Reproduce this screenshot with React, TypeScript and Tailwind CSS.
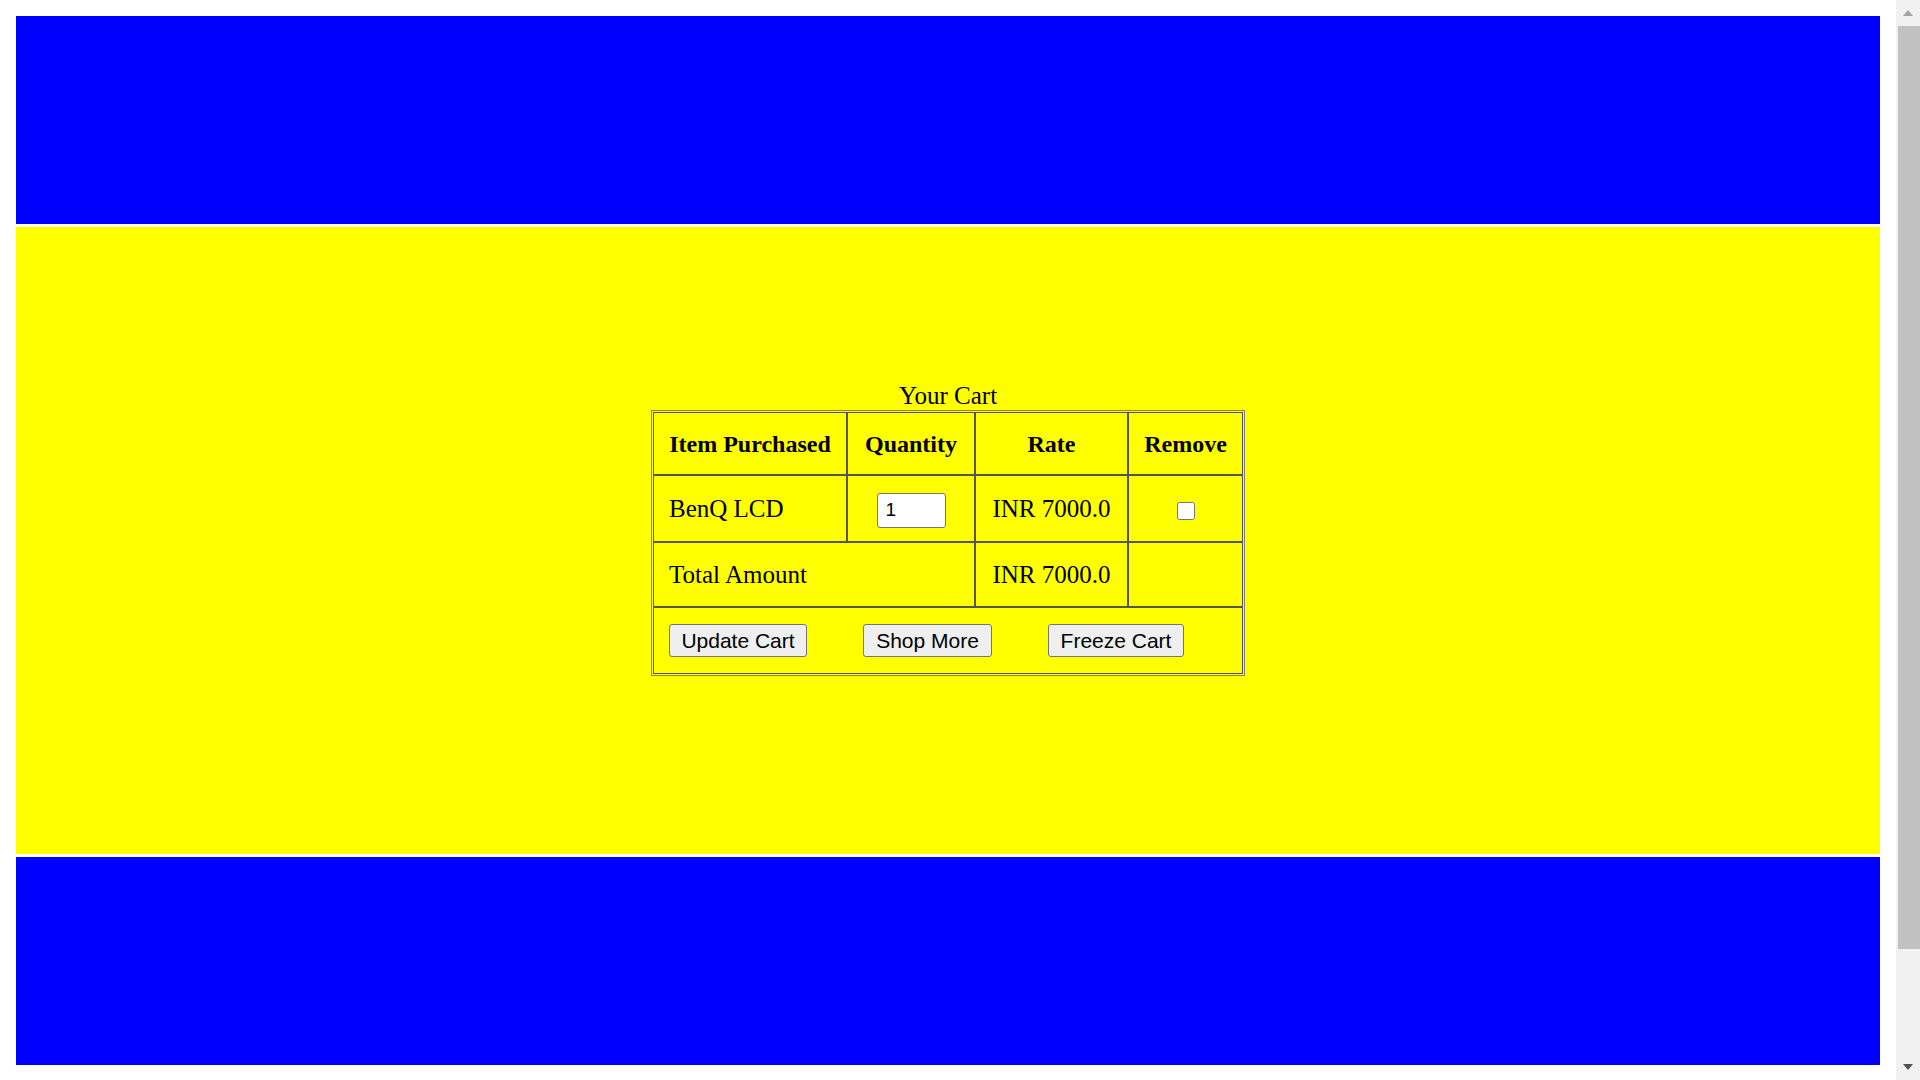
export default function App() {
  return (
    <div className="bg-white pt-4 pl-4 pb-[150px] font-['Liberation_Serif',serif] text-black">
      <div className="flex w-[1864px] flex-col gap-[3px]">
        {/* top frame */}
        <div className="h-[208px] bg-[#0000ff]" />

        {/* cart frame */}
        <div className="flex h-[627px] flex-col items-center bg-[#ffff00] pt-[154px]">
          <div className="h-[29px] text-center text-[25px] leading-[29px]">Your Cart</div>
          <div className="border border-[#808080] p-[1px]">
            <table className="table-fixed border-separate border-spacing-0 text-[25px]">
              <thead>
                <tr className="h-[63px]">
                  <th className="w-[194px] border border-[#555] text-[24px] font-bold">Item Purchased</th>
                  <th className="w-[128px] border border-[#555] text-[24px] font-bold">Quantity</th>
                  <th className="w-[153px] border border-[#555] text-[24px] font-bold">Rate</th>
                  <th className="w-[115px] border border-[#555] text-[24px] font-bold">Remove</th>
                </tr>
              </thead>
              <tbody>
                <tr className="h-[67px]">
                  <td className="border border-[#555] pl-[15px]">BenQ LCD</td>
                  <td className="border border-[#555] text-center">
                    <input
                      type="text"
                      defaultValue="1"
                      className="h-[35px] w-[69px] rounded-[3px] border border-[#767676] bg-white px-2 font-['Liberation_Sans',sans-serif] text-[19px] align-middle"
                    />
                  </td>
                  <td className="border border-[#555] text-center">INR 7000.0</td>
                  <td className="border border-[#555] text-center">
                    <input type="checkbox" className="h-[18px] w-[18px] align-middle" />
                  </td>
                </tr>
                <tr className="h-[65px]">
                  <td colSpan={2} className="border border-[#555] pl-[15px]">Total Amount</td>
                  <td className="border border-[#555] text-center">INR 7000.0</td>
                  <td className="border border-[#555]" />
                </tr>
                <tr className="h-[67px]">
                  <td colSpan={4} className="border border-[#555] pl-[15px]">
                    <div className="flex gap-[56px] font-['Liberation_Sans',sans-serif] text-[21px]">
                      <button className="h-[33px] w-[138px] rounded-[3px] border border-[#767676] bg-[#efefef]">Update Cart</button>
                      <button className="h-[33px] w-[129px] rounded-[3px] border border-[#767676] bg-[#efefef]">Shop More</button>
                      <button className="h-[33px] w-[136px] rounded-[3px] border border-[#767676] bg-[#efefef]">Freeze Cart</button>
                    </div>
                  </td>
                </tr>
              </tbody>
            </table>
          </div>
        </div>

        {/* bottom frame */}
        <div className="h-[208px] bg-[#0000ff]" />
      </div>

      {/* browser scrollbar */}
      <div className="fixed top-0 right-0 flex h-screen w-6 flex-col bg-[#f1f1f1]">
        <div className="flex h-[26px] items-center justify-center">
          <svg width="10" height="6" viewBox="0 0 10 6">
            <path d="M0 6 L5 0 L10 6 Z" fill="#a3a3a3" />
          </svg>
        </div>
        <div className="ml-[2px] h-[923px] bg-[#c1c1c1]" />
        <div className="flex-1" />
        <div className="flex h-[26px] items-center justify-center">
          <svg width="10" height="6" viewBox="0 0 10 6">
            <path d="M0 0 L10 0 L5 6 Z" fill="#505050" />
          </svg>
        </div>
      </div>
    </div>
  );
}
